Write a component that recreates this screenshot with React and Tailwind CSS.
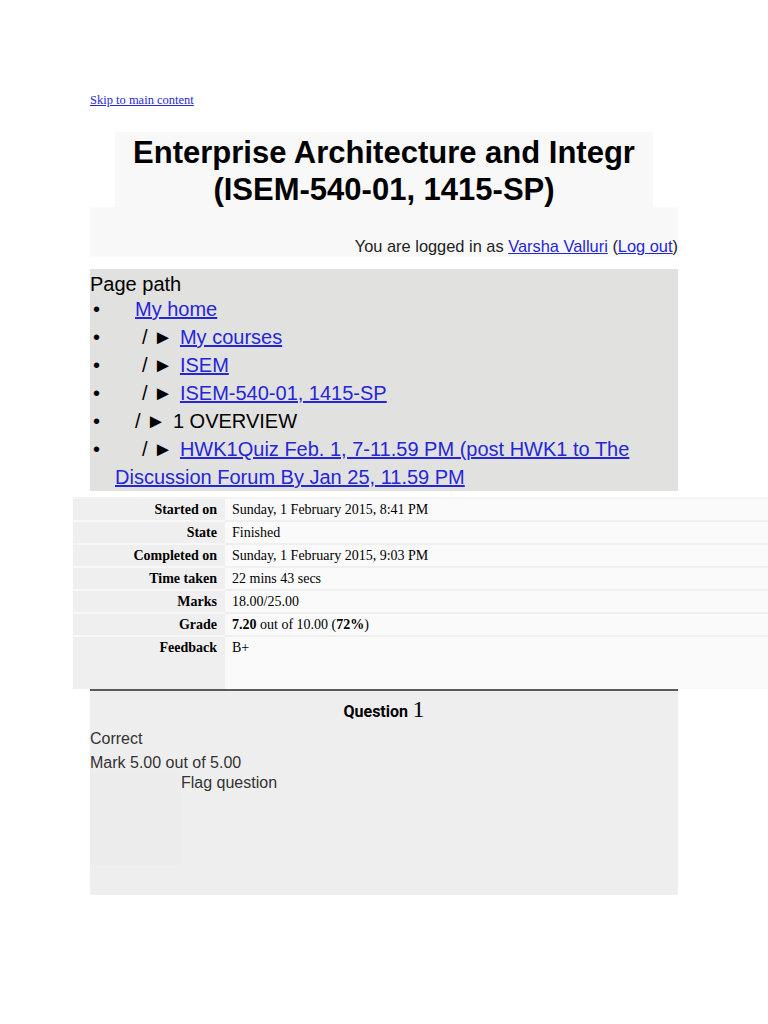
import React from "react";

const rows = [
  ["Started on", "Sunday, 1 February 2015, 8:41 PM"],
  ["State", "Finished"],
  ["Completed on", "Sunday, 1 February 2015, 9:03 PM"],
  ["Time taken", "22 mins 43 secs"],
  ["Marks", "18.00/25.00"],
  [
    "Grade",
    <>
      <b>7.20</b> out of 10.00 (<b>72%</b>)
    </>,
  ],
];

const crumbs = [
  { pad: "w-[20px]", sep: false, text: "My home", link: true },
  { pad: "w-[27px]", sep: true, text: "My courses", link: true },
  { pad: "w-[27px]", sep: true, text: "ISEM", link: true },
  { pad: "w-[27px]", sep: true, text: "ISEM-540-01, 1415-SP ", link: true },
  { pad: "w-[20px]", sep: true, text: "1 OVERVIEW", link: false },
  {
    pad: "w-[27px]",
    sep: true,
    text: "HWK1Quiz Feb. 1, 7-11.59 PM (post HWK1 to The Discussion Forum By Jan 25, 11.59 PM",
    link: true,
  },
];

export default function App() {
  const sans = { fontFamily: '"Liberation Sans", Arial, sans-serif' };
  const serif = { fontFamily: '"Liberation Serif", "Times New Roman", serif' };

  return (
    <div className="min-h-screen bg-white text-black" style={sans}>
      <div className="pt-[93px]">
        <a
          href="#main"
          className="ml-[90px] block w-fit text-[12.5px] leading-[14px] text-[#2626d9] underline"
          style={serif}
        >
          Skip to main content
        </a>

        {/* course title */}
        <div className="ml-[115px] mt-[25px] h-[75px] w-[538px] bg-[#f8f8f8] pt-[2px] text-center">
          <h1 className="text-[31px] font-bold leading-[37px]">
            Enterprise Architecture and Integr
            <br />
            (ISEM-540-01, 1415-SP)
          </h1>
        </div>

        <div className="ml-[90px] flex h-[50px] w-[588px] items-end justify-end bg-[#f8f8f8] pb-[1px] text-[16.4px] leading-[20px] text-[#222]">
          <span>
            You are logged in as{" "}
            <a href="#u" className="text-[#2626d9] underline">
              Varsha Valluri
            </a>{" "}
            (
            <a href="#o" className="text-[#2626d9] underline">
              Log out
            </a>
            )
          </span>
        </div>

        {/* breadcrumb */}
        <nav className="ml-[90px] mt-[12px] w-[588px] bg-[#e1e1df] pt-[4px] text-[20px] leading-[28px]">
          <div className="leading-[22px]">Page path</div>
          <ul className="pl-[25px]">
            {crumbs.map((c) => (
              <li
                key={c.text}
                className="relative before:absolute before:left-[-22px] before:top-0 before:content-['•']"
              >
                <span className={`inline-block ${c.pad}`} />
                {c.sep && <span className="mr-[7px]">/ ►</span>}
                {c.link ? (
                  <a href="#c" className="text-[#2626d9] underline">
                    {c.text}
                  </a>
                ) : (
                  <span>{c.text}</span>
                )}
              </li>
            ))}
          </ul>
        </nav>

        {/* attempt summary */}
        <table
          className="ml-[73px] mt-[6px] w-[695px] border-collapse border-t-2 border-[#f3f3f3] text-[14px] leading-[21px]"
          style={serif}
        >
          <tbody>
            {rows.map(([label, value]) => (
              <tr key={label}>
                <th className="w-[152px] border-b-2 border-[#f7f7f7] bg-[#efefef] pr-[8px] text-right font-bold">
                  {label}
                </th>
                <td className="border-b-2 border-[#efefef] bg-[#fafafa] pl-[7px]">
                  {value}
                </td>
              </tr>
            ))}
            <tr>
              <th className="h-[53px] w-[152px] bg-[#efefef] pr-[8px] text-right align-top font-bold">
                Feedback
              </th>
              <td className="bg-[#fafafa] pl-[7px] align-top">B+</td>
            </tr>
          </tbody>
        </table>

        {/* question block */}
        <div className="ml-[90px] h-[206px] w-[588px] border-t-2 border-[#5a5a5a] bg-[#eeeeee] text-[16px] text-[#333]">
          <h3 className="pt-[4px] text-center leading-[28px] text-black">
            <span className="font-bold" style={{ fontFamily: "Roboto, sans-serif" }}>
              Question
            </span>{" "}
            <span className="text-[24px]" style={serif}>
              1
            </span>
          </h3>
          <div className="mt-[2px] leading-[22px]">Correct</div>
          <div className="mt-[3px] leading-[20px]">Mark 5.00 out of 5.00</div>
          <div className="flex">
            <div className="h-[92px] w-[91px] bg-[#ececec]" />
            <div className="leading-[20px]">Flag question</div>
          </div>
        </div>
      </div>
    </div>
  );
}
